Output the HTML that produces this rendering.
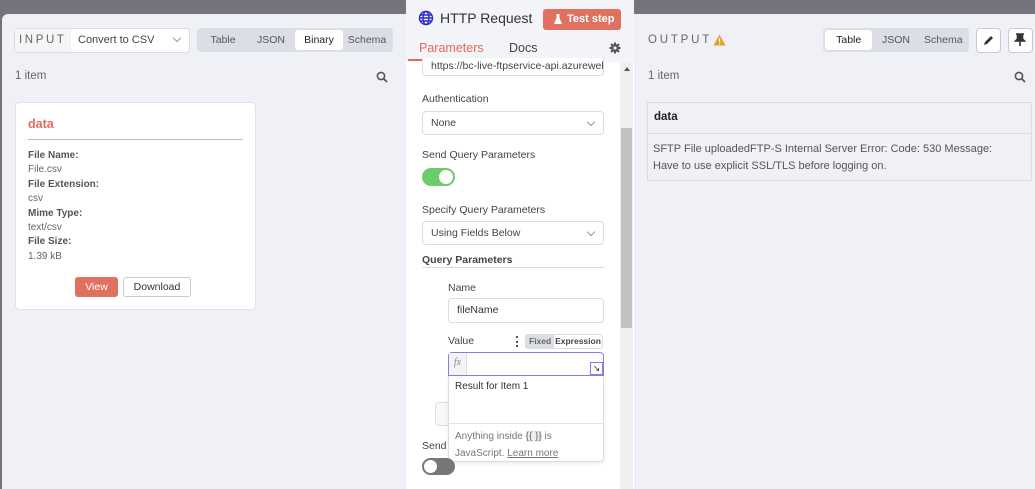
<!DOCTYPE html><html><head><style>
*{box-sizing:border-box;margin:0;padding:0}
body{width:1035px;height:489px;overflow:hidden;background:#76737d;font-family:"Liberation Sans",sans-serif;position:relative;font-size:11px;color:#555}
.abs{position:absolute}
.panel{background:#f0f1f6;}
.seg{background:#dcdee6;border-radius:4px;display:flex;padding:2px;height:24px;align-items:center}
.seg span{flex:1;text-align:center;height:20px;line-height:20px;font-size:10.5px;color:#555;border-radius:3px;white-space:nowrap}
.seg span.on{background:#fff;color:#222}
.inp{background:#fff;border:1px solid #dcdde3;border-radius:4px;height:24px;line-height:22px;padding-left:8px;font-size:10.5px;color:#444}
.lbl{font-size:10.5px;color:#444}
.chev{position:absolute;right:9px;top:7px;width:6px;height:6px;border-right:1px solid #999;border-bottom:1px solid #999;transform:rotate(45deg)}
</style></head><body>
<div class="abs panel" style="left:2px;top:14px;width:404px;height:475px;border-radius:6px 0 0 0"></div>
<div class="abs" style="left:14px;top:28px;width:176px;height:25px;background:#fff;border:1px solid #dcdde3;border-radius:4px"></div>
<div class="abs" style="left:15px;top:29px;width:56px;height:23px;background:#f5f5f7;border-right:1px solid #eee;font-size:11.5px;letter-spacing:2.6px;line-height:23px;padding-left:4px;color:#666">INPUT</div>
<div class="abs" style="left:78px;top:29px;font-size:11px;line-height:23px;color:#444">Convert to CSV</div>
<div class="abs" style="left:174px;top:35px;width:6px;height:6px;border-right:1px solid #999;border-bottom:1px solid #999;transform:rotate(45deg)"></div>
<div class="abs seg" style="left:197px;top:28px;width:196px"><span>Table</span><span>JSON</span><span class="on">Binary</span><span>Schema</span></div>
<div class="abs" style="left:15px;top:70px;font-size:11.5px;color:#666">1 item</div>
<svg class="abs" style="left:376px;top:71px" width="12" height="12" viewBox="0 0 12 12"><circle cx="5" cy="5" r="3.6" stroke="#555" stroke-width="1.6" fill="none"/><path d="M7.7 7.7L11 11" stroke="#555" stroke-width="1.8"/></svg>
<div class="abs" style="left:15px;top:102px;width:241px;height:208px;background:#fff;border:1px solid #e3e4ea;border-radius:4px"></div>
<div class="abs" style="left:28px;top:117px;font-size:12.5px;font-weight:bold;color:#e06c5a">data</div>
<div class="abs" style="left:28px;top:139px;width:215px;height:1px;background:#bbb"></div>
<div class="abs" style="left:28px;top:149px;line-height:14.4px;font-size:10px;color:#666">
<b style="color:#555">File Name:</b><br>File.csv<br><b style="color:#555">File Extension:</b><br>csv<br><b style="color:#555">Mime Type:</b><br>text/csv<br><b style="color:#555">File Size:</b><br>1.39 kB</div>
<div class="abs" style="left:75px;top:277px;width:43px;height:20px;background:#e07060;border-radius:3px;color:#fff;font-size:10.5px;text-align:center;line-height:20px">View</div>
<div class="abs" style="left:123px;top:277px;width:68px;height:20px;border:1px solid #ccc;background:#fff;border-radius:3px;color:#333;font-size:10.5px;text-align:center;line-height:18px">Download</div>
<div class="abs panel" style="left:634px;top:14px;width:401px;height:475px"></div>
<div class="abs" style="left:648px;top:34px;font-size:11.5px;letter-spacing:2.8px;color:#666">OUTPUT</div>
<svg class="abs" style="left:713px;top:34px" width="13" height="12" viewBox="0 0 13 12"><path d="M6.5 0.5L12.5 11.5H0.5Z" fill="#e0a030"/><path d="M6.5 4v4M6.5 9.3v1" stroke="#fff" stroke-width="1.3"/></svg>
<div class="abs seg" style="left:823px;top:28px;width:146px"><span class="on">Table</span><span>JSON</span><span>Schema</span></div>
<div class="abs" style="left:976px;top:28px;width:25px;height:25px;border:1px solid #ccc;background:#fff;border-radius:4px"></div>
<svg class="abs" style="left:982px;top:34px" width="13" height="13" viewBox="0 0 13 13"><path d="M2 11l1-3 6-6 2 2-6 6z" fill="#333"/></svg>
<div class="abs" style="left:1008px;top:28px;width:25px;height:25px;border:1px solid #ccc;background:#fff;border-radius:4px"></div>
<svg class="abs" style="left:1014px;top:33px" width="12" height="14" viewBox="0 0 12 14"><path d="M2 1h8M3.5 1v5L1.5 8h9l-2-2V1M6 8v5" stroke="#333" stroke-width="1.6" fill="#333"/></svg>
<div class="abs" style="left:648px;top:70px;font-size:11.5px;color:#666">1 item</div>
<svg class="abs" style="left:1014px;top:71px" width="12" height="12" viewBox="0 0 12 12"><circle cx="5" cy="5" r="3.6" stroke="#555" stroke-width="1.6" fill="none"/><path d="M7.7 7.7L11 11" stroke="#555" stroke-width="1.8"/></svg>
<div class="abs" style="left:647px;top:102px;width:385px;height:79px;border:1px solid #dcdde3"></div>
<div class="abs" style="left:648px;top:133px;width:383px;height:1px;background:#dcdde3"></div>
<div class="abs" style="left:654px;top:111px;font-size:11.5px;font-weight:bold;color:#222">data</div>
<div class="abs" style="left:653px;top:141px;font-size:11px;line-height:17px;color:#555;width:355px">SFTP File uploadedFTP-S Internal Server Error: Code: 530 Message: Have to use explicit SSL/TLS before logging on.</div>
<div class="abs" style="left:406px;top:0;width:228px;height:489px;background:#fff"></div>
<div class="abs" style="left:406px;top:0;width:228px;height:62px;background:#f3f4f8"></div>
<svg class="abs" style="left:418px;top:10px" width="16" height="16" viewBox="0 0 16 16" fill="none" stroke="#2a2acc" stroke-width="1.4"><circle cx="8" cy="8" r="6.5"/><ellipse cx="8" cy="8" rx="3" ry="6.5"/><path d="M1.5 8h13M2.5 5h11M2.5 11h11"/></svg>
<div class="abs" style="left:440px;top:10px;font-size:14px;color:#333">HTTP Request</div>
<div class="abs" style="left:543px;top:9px;width:78px;height:21px;background:#e07060;border-radius:3px;color:#fff;font-size:11px;font-weight:bold;line-height:21px;padding-left:24px">Test step</div>
<svg class="abs" style="left:553px;top:13px" width="10" height="12" viewBox="0 0 10 12"><path d="M3 1h4M3.5 1v4L1 11h8L6.5 5V1" fill="#fff"/></svg>
<div class="abs" style="left:419px;top:41px;font-size:12.5px;color:#e06c5a">Parameters</div>
<div class="abs" style="left:408px;top:59px;width:84px;height:2px;background:#e06c5a"></div>
<div class="abs" style="left:509px;top:41px;font-size:12.5px;color:#444">Docs</div>
<svg class="abs" style="left:609px;top:42px" width="12" height="12" viewBox="0 0 12 12"><path d="M6 0.5v11M0.5 6h11M2 2l8 8M10 2l-8 8" stroke="#555" stroke-width="2"/><circle cx="6" cy="6" r="4" fill="#555"/><circle cx="6" cy="6" r="1.6" fill="#f3f4f8"/></svg>
<div class="abs" style="left:620px;top:62px;width:13px;height:427px;background:#f0f0f0"></div>
<div class="abs" style="left:621px;top:128px;width:11px;height:200px;background:#c1c1c1"></div>
<div class="abs" style="left:624px;top:67px;width:0;height:0;border-left:3px solid transparent;border-right:3px solid transparent;border-bottom:4px solid #555"></div>
<div class="abs inp" style="left:422px;top:58px;width:182px;height:18px;line-height:16px;border-top:none;border-radius:0 0 4px 4px;overflow:hidden;white-space:nowrap">https://bc-live-ftpservice-api.azurewebsites</div>
<div class="abs lbl" style="left:422px;top:93px">Authentication</div>
<div class="abs inp" style="left:422px;top:111px;width:182px">None<div class="chev"></div></div>
<div class="abs lbl" style="left:422px;top:149px">Send Query Parameters</div>
<div class="abs" style="left:422px;top:168px;width:33px;height:18px;border-radius:9px;background:#6ccb6c"></div>
<div class="abs" style="left:439px;top:170px;width:14px;height:14px;border-radius:7px;background:#fff"></div>
<div class="abs lbl" style="left:422px;top:204px">Specify Query Parameters</div>
<div class="abs inp" style="left:422px;top:221px;width:182px">Using Fields Below<div class="chev"></div></div>
<div class="abs lbl" style="left:422px;top:254px;font-weight:bold;color:#444">Query Parameters</div>
<div class="abs" style="left:422px;top:267px;width:182px;height:1px;background:#dcdde3"></div>
<div class="abs lbl" style="left:448px;top:282px">Name</div>
<div class="abs inp" style="left:448px;top:298px;width:156px;height:25px;color:#333">fileName</div>
<div class="abs lbl" style="left:448px;top:335px">Value</div>
<div class="abs" style="left:516px;top:336px;width:2px;height:11px;border-left:2px dotted #555"></div>
<div class="abs" style="left:525px;top:334px;width:78px;height:15px;background:#dcdee6;border-radius:3px"></div>
<div class="abs" style="left:529px;top:336px;font-size:8.5px;font-weight:bold;color:#666">Fixed</div>
<div class="abs" style="left:554px;top:335px;width:48px;height:13px;background:#fff;border-radius:2px;font-size:8.5px;font-weight:bold;color:#444;text-align:center;line-height:13px">Expression</div>
<div class="abs" style="left:448px;top:352px;width:156px;height:24px;border:1px solid #8a7ce0;border-radius:4px 4px 0 0;background:#fff"></div>
<div class="abs" style="left:449px;top:353px;width:18px;height:22px;background:#f3f4f8;border-right:1px solid #ddd;font-family:'Liberation Serif',serif;font-style:italic;font-size:10px;color:#888;text-align:center;line-height:20px">fx</div>
<div class="abs" style="left:590px;top:362px;width:13px;height:13px;border:1px solid #8a7ce0;background:#fff;font-size:9px;text-align:center;line-height:11px;color:#333">↘</div>
<div class="abs" style="left:435px;top:402px;width:30px;height:24px;border:1px solid #ddd;border-radius:4px;background:#f8f8fa"></div>
<div class="abs" style="left:448px;top:376px;width:156px;height:86px;background:#fff;border:1px solid #dcdde3;border-top:none;border-radius:0 0 4px 4px;box-shadow:0 2px 4px rgba(0,0,0,.08)"></div>
<div class="abs" style="left:448px;top:423px;width:156px;height:1px;background:#e3e4ea"></div>
<div class="abs" style="left:455px;top:381px;font-size:10px;color:#333">Result for Item 1</div>
<div class="abs" style="left:455px;top:428px;font-size:10px;line-height:17px;color:#777;width:145px">Anything inside <span style="background:#eee;color:#666">{{ }}</span> is<br>JavaScript. <u>Learn more</u></div>
<div class="abs lbl" style="left:422px;top:440px">Send</div>
<div class="abs" style="left:422px;top:458px;width:33px;height:17px;border-radius:9px;background:#777"></div>
<div class="abs" style="left:424px;top:460px;width:13px;height:13px;border-radius:7px;background:#fff"></div>
</body></html>
